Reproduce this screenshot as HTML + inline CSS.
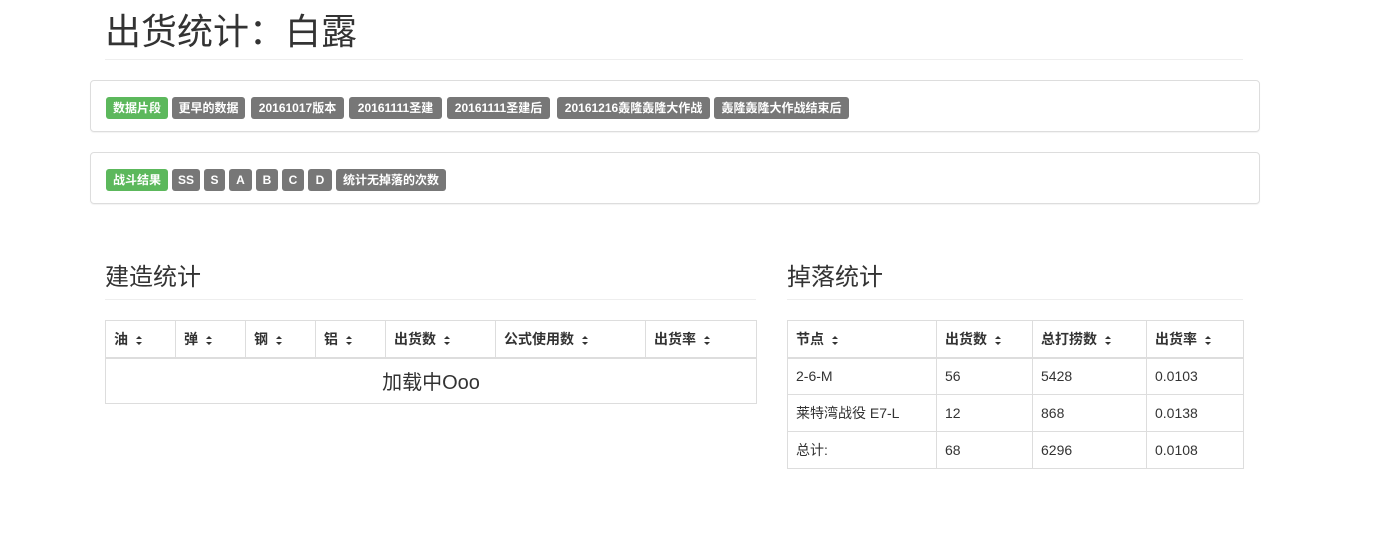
<!DOCTYPE html>
<html><head><meta charset="utf-8">
<style>
*{margin:0;padding:0;box-sizing:border-box}
body{width:1378px;height:536px;background:#fff;font-family:"Liberation Sans","Noto Sans CJK SC",sans-serif;color:#333;position:relative;overflow:hidden}
h1{position:absolute;left:105px;top:8px;font-size:36px;font-weight:400;line-height:48px;color:#333}
.hr{position:absolute;height:1px;background:#eee}
.panel{position:absolute;left:90px;width:1170px;height:52px;border:1px solid #ddd;border-radius:4px;box-shadow:0 1px 1px rgba(0,0,0,.05)}
.lb{position:absolute;top:16px;height:22px;line-height:22px;color:#fff;font-size:12px;font-weight:bold;text-align:center;border-radius:3px;background:#777;white-space:nowrap}
.g{background:#5cb85c}
h3{position:absolute;font-size:24px;font-weight:400;line-height:30px;color:#333}
table{position:absolute;border-collapse:collapse;table-layout:fixed;font-size:14px}
td,th{border:1px solid #ddd;padding:0 8px;text-align:left;white-space:nowrap}
th{font-weight:bold;height:37px;border-bottom:2px solid #ddd}
td{height:37px;color:#333}
.s{display:inline-block;width:6px;height:9px;position:relative;margin-left:8px;vertical-align:middle}
.s:before,.s:after{content:"";position:absolute;left:0;border-left:3px solid transparent;border-right:3px solid transparent}
.s:before{top:0;border-bottom:3px solid #333}
.s:after{bottom:0;border-top:3px solid #333}
</style></head><body>
<h1>出货统计：白露</h1>
<div class="hr" style="left:105px;top:59px;width:1138px"></div>

<div class="panel" style="top:80px">
<span class="lb g" style="left:15px;width:62px">数据片段</span>
<span class="lb" style="left:81px;width:73px">更早的数据</span>
<span class="lb" style="left:160px;width:93px">20161017版本</span>
<span class="lb" style="left:258px;width:93px">20161111圣建</span>
<span class="lb" style="left:356px;width:103px">20161111圣建后</span>
<span class="lb" style="left:466px;width:153px">20161216轰隆轰隆大作战</span>
<span class="lb" style="left:623px;width:135px">轰隆轰隆大作战结束后</span>
</div>

<div class="panel" style="top:152px">
<span class="lb g" style="left:15px;width:62px">战斗结果</span>
<span class="lb" style="left:81px;width:28px">SS</span>
<span class="lb" style="left:113px;width:21px">S</span>
<span class="lb" style="left:138px;width:23px">A</span>
<span class="lb" style="left:165px;width:22px">B</span>
<span class="lb" style="left:191px;width:22px">C</span>
<span class="lb" style="left:217px;width:24px">D</span>
<span class="lb" style="left:245px;width:110px">统计无掉落的次数</span>
</div>

<h3 style="left:105px;top:263px">建造统计</h3>
<div class="hr" style="left:105px;top:299px;width:651px"></div>
<h3 style="left:787px;top:263px">掉落统计</h3>
<div class="hr" style="left:787px;top:299px;width:456px"></div>

<table style="left:105px;top:320px;width:651px">
<colgroup><col style="width:70px"><col style="width:70px"><col style="width:70px"><col style="width:70px"><col style="width:110px"><col style="width:150px"><col style="width:111px"></colgroup>
<tr><th>油<span class="s"></span></th><th>弹<span class="s"></span></th><th>钢<span class="s"></span></th><th>铝<span class="s"></span></th><th>出货数<span class="s"></span></th><th>公式使用数<span class="s"></span></th><th>出货率<span class="s"></span></th></tr>
<tr><td colspan="7" style="text-align:center;font-size:20px;height:46px">加载中Ooo</td></tr>
</table>

<table style="left:787px;top:320px;width:456px">
<colgroup><col style="width:149px"><col style="width:96px"><col style="width:114px"><col style="width:97px"></colgroup>
<tr><th>节点<span class="s"></span></th><th>出货数<span class="s"></span></th><th>总打捞数<span class="s"></span></th><th>出货率<span class="s"></span></th></tr>
<tr><td>2-6-M</td><td>56</td><td>5428</td><td>0.0103</td></tr>
<tr><td>莱特湾战役 E7-L</td><td>12</td><td>868</td><td>0.0138</td></tr>
<tr><td>总计:</td><td>68</td><td>6296</td><td>0.0108</td></tr>
</table>
</body></html>
